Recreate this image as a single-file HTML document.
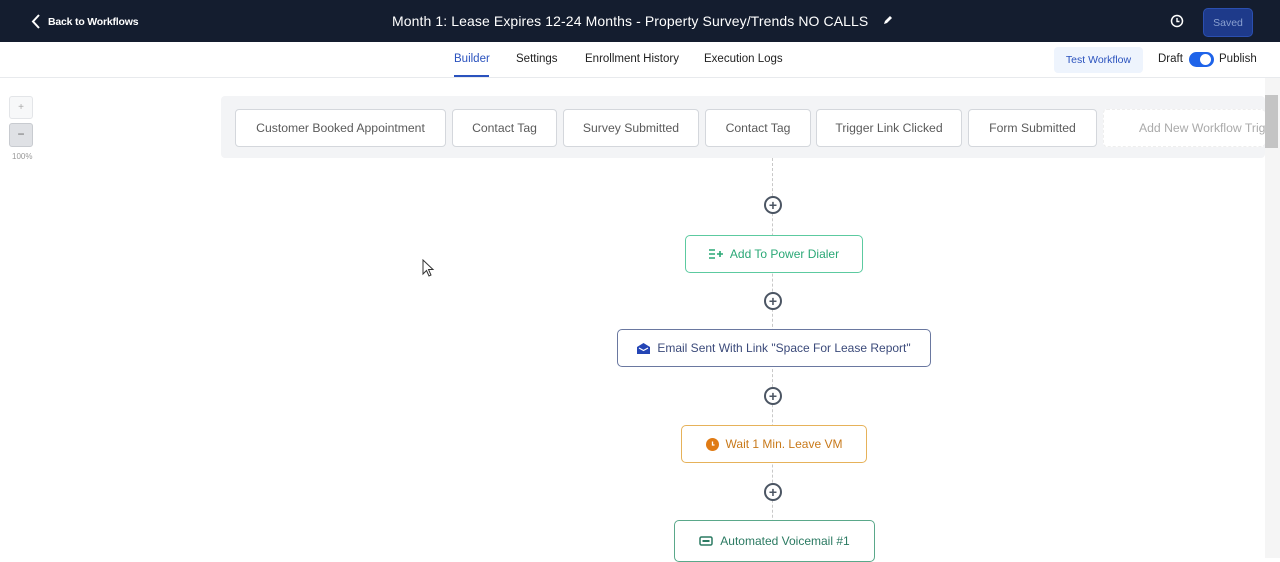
<!DOCTYPE html>
<html><head><style>
*{box-sizing:border-box;margin:0;padding:0}
body{width:1280px;height:558px;overflow:hidden;background:#fff;font-family:"Liberation Sans",sans-serif;position:relative}
.abs{position:absolute}
.hdr{left:0;top:0;width:1280px;height:42px;background:#141d2f;color:#fff}
.tab{top:53px;font-size:11.5px;color:#222}
.trig{top:109px;height:38px;border:1px solid #d4d7dc;border-radius:4px;background:#fff;font-size:12.2px;color:#5a5a5a;display:flex;align-items:center;justify-content:center;white-space:nowrap;overflow:hidden}
.plus{width:18px;height:18px;border:2px solid #4b5563;border-radius:50%;left:764px;background:#fff;display:flex;align-items:center;justify-content:center;font-size:14px;font-weight:bold;color:#4b5563;line-height:1}
.node{height:38px;border:1px solid;border-radius:5px;background:#fff;display:flex;align-items:center;justify-content:center;font-size:12px;gap:7px;white-space:nowrap}
</style></head><body>
<div class="abs hdr">
 <svg class="abs" style="left:31px;top:14px" width="10" height="15" viewBox="0 0 10 15"><path d="M8 1L2 7.5L8 14" stroke="#fff" stroke-width="2" fill="none"/></svg>
 <div class="abs" style="left:48px;top:16px;font-size:10.5px;font-weight:bold;letter-spacing:-0.2px">Back to Workflows</div>
 <div class="abs" style="left:392px;top:13px;font-size:14px;letter-spacing:0.1px">Month 1: Lease Expires 12-24 Months - Property Survey/Trends NO CALLS</div>
 <svg class="abs" style="left:883px;top:15px" width="10" height="10" viewBox="0 0 10 10"><path d="M1 9L2 6L7 1L9 3L4 8Z" fill="#fff"/></svg>
 <svg class="abs" style="left:1170px;top:14px" width="14" height="14" viewBox="0 0 14 14"><circle cx="7" cy="7" r="5.5" stroke="#fff" stroke-width="1.5" fill="none"/><path d="M7 4V7.5H9.5" stroke="#fff" stroke-width="1.4" fill="none"/></svg>
 <div class="abs" style="left:1203px;top:8px;width:50px;height:29px;background:#1e3a8a;border:1px solid #2b4fb0;border-radius:5px;color:#8aa0d0;font-size:10.5px;display:flex;align-items:center;justify-content:center">Saved</div>
</div>
<div class="abs" style="left:0;top:77px;width:1280px;height:1px;background:#e8eaed"></div>
<div class="abs tab" style="left:454px;color:#2a52be">Builder</div>
<div class="abs" style="left:454px;top:75px;width:35px;height:2px;background:#2a52be"></div>
<div class="abs tab" style="left:516px">Settings</div>
<div class="abs tab" style="left:585px">Enrollment History</div>
<div class="abs tab" style="left:704px">Execution Logs</div>
<div class="abs" style="left:1054px;top:47px;width:89px;height:26px;background:#eef4fd;border-radius:4px;color:#2a52be;font-size:10.5px;display:flex;align-items:center;justify-content:center">Test Workflow</div>
<div class="abs tab" style="left:1158px">Draft</div>
<div class="abs" style="left:1189px;top:52px;width:25px;height:15px;background:#1e63e9;border-radius:8px"><div class="abs" style="left:11px;top:2px;width:11px;height:11px;background:#fff;border-radius:50%"></div></div>
<div class="abs tab" style="left:1219px">Publish</div>
<div class="abs" style="left:9px;top:96px;width:24px;height:23px;border:1px solid #e3e5e8;border-radius:3px;background:#f7f8f9;color:#aaa;font-size:10px;text-align:center;line-height:21px">+</div>
<div class="abs" style="left:9px;top:123px;width:24px;height:24px;border:1px solid #c8cbd0;border-radius:3px;background:#dfe1e5;color:#666;font-size:12px;text-align:center;line-height:21px">−</div>
<div class="abs" style="left:12px;top:152px;font-size:8px;color:#999">100%</div>
<div class="abs" style="left:221px;top:96px;width:1044px;height:62px;background:#f3f4f6;border-radius:4px"></div>
<div class="abs trig" style="left:235px;width:211px">Customer Booked Appointment</div>
<div class="abs trig" style="left:452px;width:105px">Contact Tag</div>
<div class="abs trig" style="left:563px;width:136px">Survey Submitted</div>
<div class="abs trig" style="left:705px;width:106px">Contact Tag</div>
<div class="abs trig" style="left:816px;width:146px">Trigger Link Clicked</div>
<div class="abs trig" style="left:968px;width:129px">Form Submitted</div>
<div class="abs trig" style="left:1103px;width:162px;border:1px dashed #eee;color:#aaa;justify-content:flex-start;padding-left:35px;border-right:none">Add New Workflow Trigger</div>
<div class="abs" style="left:1265px;top:78px;width:15px;height:480px;background:#f5f5f5"></div>
<div class="abs" style="left:1265px;top:95px;width:13px;height:53px;background:#c4c4c4"></div>
<div class="abs" style="left:772px;top:158px;width:0;height:400px;border-left:1px dashed #c8c8c8"></div>
<div class="abs plus" style="top:196px">+</div>
<div class="abs plus" style="top:292px">+</div>
<div class="abs plus" style="top:387px">+</div>
<div class="abs plus" style="top:483px">+</div>
<div class="abs node" style="left:685px;top:235px;width:178px;border-color:#5ccaa0;color:#2aa876"><svg width="14" height="10" viewBox="0 0 14 10"><path d="M0 1H6M0 5H6M0 9H6M8 5H14M11 2V8" stroke="#2aa876" stroke-width="1.6"/></svg>Add To Power Dialer</div>
<div class="abs node" style="left:617px;top:329px;width:314px;border-color:#6a78a0;color:#3b4a7a"><svg width="13" height="11" viewBox="0 0 13 11"><path d="M0 4L6.5 0L13 4V11H0Z" fill="#2445b5"/><path d="M2 5L6.5 7.5L11 5" stroke="#fff" stroke-width="1.2" fill="none"/></svg>Email Sent With Link "Space For Lease Report"</div>
<div class="abs node" style="left:681px;top:425px;width:186px;border-color:#e6b25a;color:#c8791a"><svg width="13" height="13" viewBox="0 0 13 13"><circle cx="6.5" cy="6.5" r="6.5" fill="#e07b14"/><path d="M6.5 3.5V7H8.5" stroke="#fff" stroke-width="1.3" fill="none"/></svg>Wait 1 Min. Leave VM</div>
<div class="abs node" style="left:674px;top:520px;width:201px;height:42px;border-color:#5aa88a;color:#2b7a62"><svg width="14" height="10" viewBox="0 0 14 10"><rect x="1" y="1" width="12" height="8" rx="1.5" stroke="#2b7a62" stroke-width="1.5" fill="none"/><rect x="3.5" y="4" width="7" height="2" fill="#2b7a62"/></svg>Automated Voicemail #1</div>
<svg class="abs" style="left:422px;top:259px" width="13" height="18" viewBox="0 0 13 18"><path d="M1 1V15L4.5 11.5L7 17L9 16L6.5 10.5H11Z" fill="#fff" stroke="#333" stroke-width="1"/></svg>
</body></html>
